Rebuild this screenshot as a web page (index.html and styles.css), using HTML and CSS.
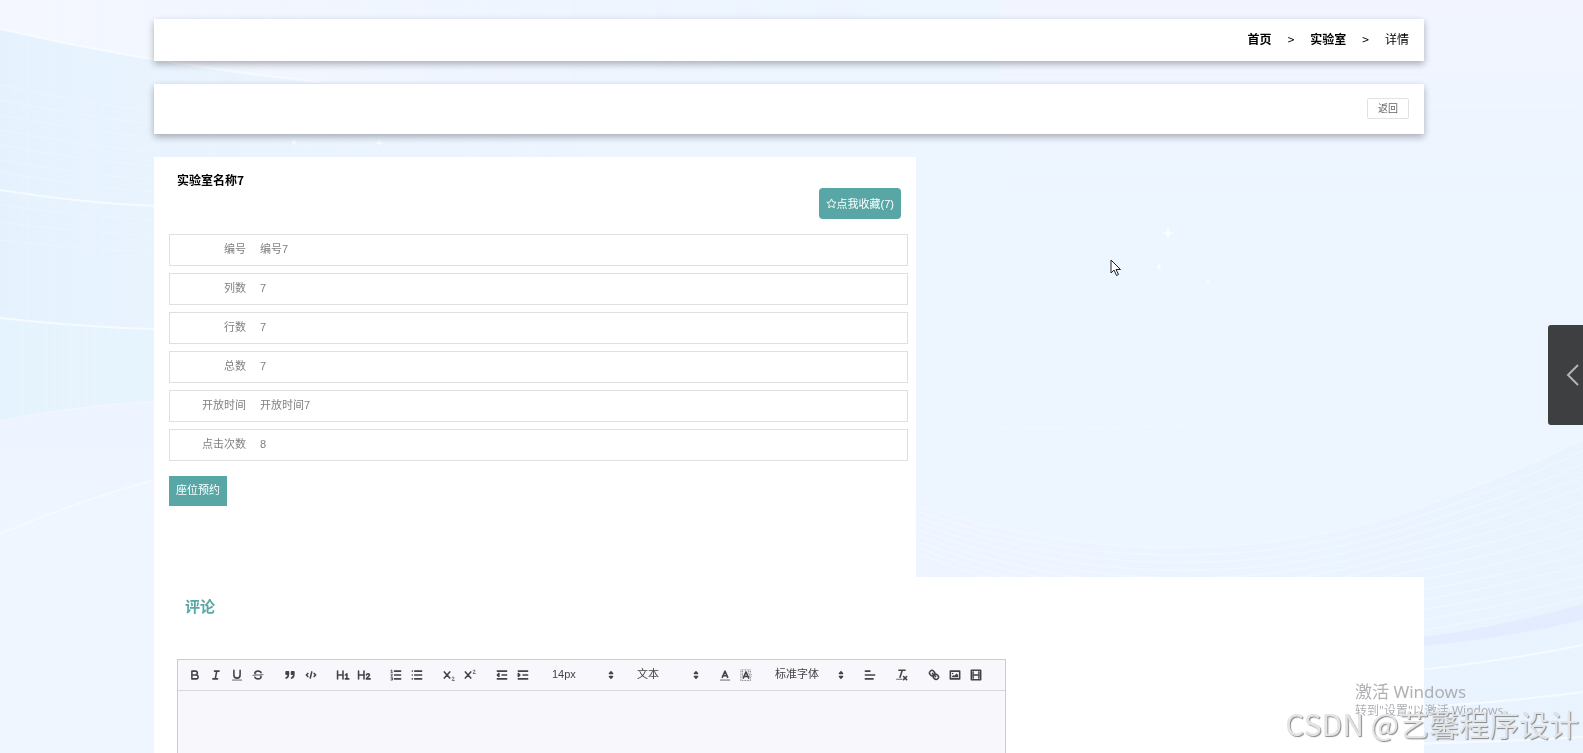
FILE: index.html
```html
<!DOCTYPE html>
<html lang="zh-CN">
<head>
<meta charset="utf-8">
<title>实验室详情</title>
<link rel="stylesheet" href="styles.css">
</head>
<body>
<svg class="backdrop" viewBox="0 0 1583 753" preserveAspectRatio="none" aria-hidden="true">
  <defs>
    <linearGradient id="leftTint" x1="0" y1="0" x2="1" y2="0">
      <stop offset="0" stop-color="#e5f2fe"/><stop offset="1" stop-color="#eaf2fe" stop-opacity="0"/>
    </linearGradient>
    <linearGradient id="lilac" x1="0" y1="0" x2="1" y2="0">
      <stop offset="0" stop-color="#f4f7ff"/><stop offset="1" stop-color="#f1f5ff" stop-opacity="0"/>
    </linearGradient>
    <linearGradient id="corner" x1="0" y1="0" x2="1" y2="0">
      <stop offset="0" stop-color="#eef4ff"/><stop offset="1" stop-color="#e5f2fe"/>
    </linearGradient>
    <linearGradient id="topRight" x1="0" y1="0" x2="0" y2="1">
      <stop offset="0" stop-color="#f2f5ff"/><stop offset="1" stop-color="#f0f5ff" stop-opacity="0"/>
    </linearGradient>
    <linearGradient id="haze" x1="0" y1="0" x2="0" y2="1">
      <stop offset="0" stop-color="#edf3ff"/><stop offset="1" stop-color="#eff6ff"/>
    </linearGradient>
  </defs>
  <path d="M0 0H900L700 80L320 82Q150 64 0 29Z" fill="url(#lilac)"/>
  <path d="M1000 0H1583V200H1000Z" fill="url(#topRight)"/>
  <path d="M0 29Q150 64 320 82L600 150V420H0Z" fill="url(#leftTint)"/>
  <path d="M0 318Q80 326 154 329V400Q70 406 0 421Z" fill="#e6f4fe" opacity=".7"/>
  <path d="M0 421Q70 406 154 400V480Q80 500 0 534Z" fill="url(#haze)"/>
  <path d="M0 534Q80 500 154 480V753H0Z" fill="#eff6ff"/>
  <g fill="none" stroke="#fff">
    <path d="M0 29Q150 64 320 82" stroke-width="2" opacity=".5"/>
    <path d="M0 190Q80 203 154 206" stroke-width="2" opacity=".6"/>
    <path d="M0 318Q80 327 154 329" stroke-width="2" opacity=".6"/>
    <path d="M0 421Q70 406 154 402" opacity=".3"/>
    <path d="M0 534Q80 500 154 480" stroke-width="2" opacity=".4"/>
    <path d="M0 85Q80 103 154 111M0 100Q80 116 154 124M0 115Q80 130 154 138M0 130Q80 145 154 152M0 145Q80 160 154 166M0 160Q80 174 154 180M0 172Q80 186 154 192M0 205Q80 216 154 220M0 222Q80 232 154 236M0 240Q80 249 154 252" opacity=".2"/>
    <path d="M0 540Q80 508 154 490M0 546Q80 515 154 499M0 552Q80 522 154 508" opacity=".2"/>
  </g>
  <path d="M916 505Q1160 585 1400 515Q1500 480 1583 440V753H916Z" fill="url(#corner)" opacity=".7"/>
  <g fill="none" stroke="#fff">
    <path d="M1570 200Q1430 395 1180 425Q1090 430 990 428" opacity=".3"/>
    <g opacity=".35">
      <path d="M916 505Q1160 585 1400 515Q1500 480 1583 440"/>
      <path d="M916 511Q1160 593 1400 523Q1500 490 1583 451"/>
      <path d="M916 517Q1160 601 1400 531Q1500 500 1583 464"/>
      <path d="M916 523Q1160 609 1400 539Q1500 510 1583 476"/>
      <path d="M916 529Q1160 617 1400 547Q1500 520 1583 487"/>
      <path d="M916 535Q1160 625 1400 555Q1500 532 1583 502"/>
      <path d="M916 541Q1160 633 1400 563Q1500 543 1583 515"/>
      <path d="M916 547Q1160 641 1400 574Q1500 555 1583 528"/>
      <path d="M916 553Q1160 649 1400 584Q1500 566 1583 541"/>
    </g>
    <path d="M1400 594Q1500 577 1583 553M1400 604Q1500 587 1583 565M1400 614Q1500 597 1583 576M1400 624Q1500 607 1583 586M1400 634Q1500 619 1583 597" opacity=".35"/>
    <path d="M1400 672Q1500 662 1583 645M1400 708Q1500 703 1583 692M1400 744Q1500 742 1583 737" stroke-width="2" opacity=".6"/>
  </g>
  <path d="M1400 640Q1500 628 1583 604V620Q1500 640 1400 648Z" fill="#e0eafe" opacity=".7"/>
  <g fill="#fff">
    <path d="M1168 227l1 5 5 1-5 1-1 6-1-6-5-1 5-1z"/>
    <path d="M1159 263l1 3 2 1-2 1-1 3-1-3-2-1 2-1z" opacity=".8"/>
    <path d="M1208 278l1 2 1 1-1 1-1 2-1-2-1-1 1-1z" opacity=".5"/>
    <path d="M294 138l1 3 2 1-2 1-1 3-1-3-2-1 2-1z" opacity=".7"/>
    <path d="M379 138l1 4 4 1-4 1-1 2-1-2-4-1 4-1z" opacity=".8"/>
  </g>
</svg>

<main class="page">
  <nav class="bar crumbs" aria-label="面包屑">
    <a href="#">首页</a><span>&gt;</span><a href="#">实验室</a><span>&gt;</span><span>详情</span>
  </nav>

  <div class="bar back-bar"><button class="back" type="button">返回</button></div>

  <section class="detail">
    <h1>实验室名称7</h1>
    <button class="favorite" type="button">
      <svg viewBox="0 0 12 12" aria-hidden="true"><path d="M6 1l1.500 3.300 3.500.4-2.600 2.400.7 3.500L6 8.900l-3.100 1.700.7-3.500L1 4.700l3.500-.4z"/></svg>点我收藏(7)
    </button>
    <dl class="fields">
      <div><dt>编号</dt><dd>编号7</dd></div>
      <div><dt>列数</dt><dd>7</dd></div>
      <div><dt>行数</dt><dd>7</dd></div>
      <div><dt>总数</dt><dd>7</dd></div>
      <div><dt>开放时间</dt><dd>开放时间7</dd></div>
      <div><dt>点击次数</dt><dd>8</dd></div>
    </dl>
    <button class="reserve" type="button">座位预约</button>
  </section>

  <section class="comments">
    <h2>评论</h2>
    <div class="editor">
      <div class="toolbar" role="toolbar" aria-label="格式">
        <div class="group">
          <button type="button" aria-label="粗体"><svg viewBox="0 0 18 18"><path d="M5 4H9.500a2.500 2.500 0 0 1 0 5H5ZM5 9h5.500a2.500 2.500 0 0 1 0 5H5Z"/></svg></button>
          <button type="button" aria-label="斜体"><svg viewBox="0 0 18 18"><path d="M7 4h6M5 14h6M8 14l2-10"/></svg></button>
          <button type="button" aria-label="下划线"><svg viewBox="0 0 18 18"><path d="M5 3V9a4 4 0 0 0 8 0V3"/><path class="thin" d="M3 15.500h12"/></svg></button>
          <button type="button" aria-label="删除线"><svg viewBox="0 0 18 18"><path class="thin" d="M15.500 8.500l-13 1"/><path class="fill" d="M9 8C6.500 7.800 6 7.500 6 6.500 6 5.800 7.300 5 9 5c1.600 0 2.800.7 3 1.300a1 1 0 0 0 1.900-.6C13.400 4.100 11.400 3 9 3 6.200 3 4 4.500 4 6.500a3.200 3.200 0 0 0 .5 1.800ZM9 10c2.500.2 3 .5 3 1.500 0 .7-1.300 1.500-3 1.500-1.600 0-2.800-.7-3-1.300a1 1 0 1 0-1.900.6C4.600 13.900 6.600 15 9 15c2.800 0 5-1.500 5-3.500a3.200 3.200 0 0 0-.5-1.800Z"/></svg></button>
        </div>
        <div class="group">
          <button type="button" aria-label="引用"><svg viewBox="0 0 18 18"><path class="solid" d="M4 5h3v3H4zM11 5h3v3h-3zM7 8c0 4-3 5-3 5M14 8c0 4-3 5-3 5"/></svg></button>
          <button type="button" aria-label="代码"><svg viewBox="0 0 18 18"><path d="M5 7L3 9l2 2M13 7l2 2-2 2M10 5L8 13"/></svg></button>
        </div>
        <div class="group">
          <button type="button" aria-label="标题一"><svg viewBox="0 0 18 18"><path d="M2 4v10M9 4v10M2 9h7M12 9l2-1.500V14M12 14h4.500"/></svg></button>
          <button type="button" aria-label="标题二"><svg viewBox="0 0 18 18"><path d="M2 4v10M9 4v10M2 9h7M12 9c.5-2 4-2 4 0 0 2-3.500 3-4 5h5"/></svg></button>
        </div>
        <div class="group">
          <button type="button" aria-label="有序列表"><svg viewBox="0 0 18 18"><path d="M7 4h8M7 9h8M7 14h8"/><path class="thin" d="M2.500 3l1-.5v3M2.500 5.500h2M2.500 8h2L2.500 10.500h2M2.500 12.500h2v3h-2M3 14h1.500"/></svg></button>
          <button type="button" aria-label="无序列表"><svg viewBox="0 0 18 18"><path d="M6 4h9M6 9h9M6 14h9M3 4v.01M3 9v.01M3 14v.01"/></svg></button>
        </div>
        <div class="group">
          <button type="button" aria-label="下标"><svg viewBox="0 0 18 18"><path d="M3 5l7 8M10 5l-7 8"/><path class="thin" d="M13 12.500c.3-1.300 2.500-1.200 2.300.2C15.200 14 13.500 14.500 13 16h2.800"/></svg></button>
          <button type="button" aria-label="上标"><svg viewBox="0 0 18 18"><path d="M3 5l7 8M10 5l-7 8"/><path class="thin" d="M13 3.500c.3-1.300 2.500-1.200 2.300.2C15.200 5 13.500 5.500 13 7h2.800"/></svg></button>
        </div>
        <div class="group">
          <button type="button" aria-label="减少缩进"><svg viewBox="0 0 18 18"><path d="M3 14h12M3 4h12M9 9h6"/><path class="solid" d="M5 7v4L3 9z"/></svg></button>
          <button type="button" aria-label="增加缩进"><svg viewBox="0 0 18 18"><path d="M3 14h12M3 4h12M9 9h6"/><path class="solid" d="M3 7v4l2-2z"/></svg></button>
        </div>
        <label class="picker"><select aria-label="字号"><option>14px</option></select><svg viewBox="0 0 18 18" aria-hidden="true"><path class="solid" d="M7 11l2 2 2-2zM7 7l2-2 2 2z"/></svg></label>
        <label class="picker"><select aria-label="标题"><option>文本</option></select><svg viewBox="0 0 18 18" aria-hidden="true"><path class="solid" d="M7 11l2 2 2-2zM7 7l2-2 2 2z"/></svg></label>
        <div class="group">
          <button type="button" aria-label="文字颜色"><svg viewBox="0 0 18 18"><path class="thin" d="M3 15.500h12"/><path d="M5.500 12L9 4l3.500 8M11.600 10H6.400"/></svg></button>
          <button type="button" aria-label="背景颜色"><svg viewBox="0 0 18 18"><path class="dots" d="M2 2.500h14M2 4.500h4M12 4.500h4M2 6.500h4M12 6.500h4M2 8.500h3M13 8.500h3M2 10.500h3M13 10.500h3M2 12.500h2M14 12.500h2M2 14.500h2M14 14.500h2M2 16h14"/><path d="M5.500 13L9 5l3.500 8M11.600 11H6.400"/></svg></button>
        </div>
        <label class="picker wide"><select aria-label="字体"><option>标准字体</option></select><svg viewBox="0 0 18 18" aria-hidden="true"><path class="solid" d="M7 11l2 2 2-2zM7 7l2-2 2 2z"/></svg></label>
        <div class="group">
          <button type="button" aria-label="对齐"><svg viewBox="0 0 18 18"><path d="M3 4h6M3 9h12M3 14h10"/></svg></button>
        </div>
        <div class="group">
          <button type="button" aria-label="清除格式"><svg viewBox="0 0 18 18"><path d="M5 3h8M6.400 12L9.400 3M11 11l4 4M15 11l-4 4"/><path class="thin" d="M2 14.500h7"/></svg></button>
        </div>
        <div class="group">
          <button type="button" aria-label="链接"><svg viewBox="0 0 18 18"><path d="M7 7l4 4M8.900 4.600a3.500 3.500 0 0 1 .4 4.700A3.500 3.500 0 0 1 4.600 8.900C3.200 7.500 2 6.400 4.200 4.200S7.500 3.200 8.900 4.600ZM13.400 9.100a3.500 3.500 0 0 0-4.700-.4 3.500 3.500 0 0 0 .4 4.700c1.400 1.400 2.500 2.500 4.700.4S14.800 10.500 13.400 9.100Z"/></svg></button>
          <button type="button" aria-label="图片"><svg viewBox="0 0 18 18"><path d="M3 4h12v10H3z"/><circle class="fill" cx="6" cy="7" r="1"/><path class="fill" d="M5 12v-1l2-2 1 1 3-3 2 2v3z"/></svg></button>
          <button type="button" aria-label="视频"><svg viewBox="0 0 18 18"><path d="M3 3h12v12H3z"/><path class="thin" d="M5.500 3v12M12.500 3v12M3 5.500h3M3 7.500h3M3 10.500h3M3 12.500h3M12 5.500h3M12 7.500h3M12 10.500h3M12 12.500h3"/><path d="M5 9h8"/></svg></button>
        </div>
      </div>
      <textarea aria-label="评论内容"></textarea>
    </div>
  </section>
</main>

<button class="drawer" type="button" aria-label="展开侧栏"><svg viewBox="0 0 14 22" aria-hidden="true"><path d="M12 1L2 11l10 10"/></svg></button>

<div class="activate"><p>激活 Windows</p><p class="hint">转到"设置"以激活 Windows。</p></div>
<p class="watermark">CSDN @艺馨程序设计</p>
<svg class="cursor" viewBox="0 0 12 18" aria-hidden="true"><path d="M1 1v13l3-3 2.500 5.500 2-1L6 10.500h4.500z"/></svg>
</body>
</html>
```

FILE: styles.css
```css
* { box-sizing: border-box; }

body {
  margin: 0;
  background: #edf5ff;
  color: #000;
  font: 12px/16px "Liberation Sans", "Noto Sans CJK SC", sans-serif;
}

h1, h2, p, dl, dd { margin: 0; }
button, select, textarea { font: inherit; }

.backdrop {
  position: fixed;
  inset: 0;
  z-index: -1;
  width: 100%;
  height: 100%;
}

.page {
  display: flex;
  flex-direction: column;
  min-height: 100vh;
  padding: 19px 159px 0 154px;
}

/* top bars */
.bar {
  display: flex;
  align-items: center;
  justify-content: flex-end;
  padding: 0 15px 2px;
  margin-bottom: 23px;
  background: #fff;
  box-shadow: 0 3px 7px rgba(0, 0, 0, .3);
}

.crumbs {
  gap: 16px;
  min-height: 42px;
  font-family: "Noto Sans CJK SC", sans-serif;
}
.crumbs a { color: #000; font-weight: 700; text-decoration: none; }

.back-bar { min-height: 50px; }
.back {
  padding: 0 10px;
  border: 1px solid #e2e2e2;
  border-radius: 2px;
  background: #fff;
  color: #666;
  font-size: 10px;
  line-height: 19px;
}

/* laboratory details */
.detail {
  display: flex;
  flex-direction: column;
  align-items: flex-start;
  width: 60%;
  min-height: 420px;
  padding: 15px 8px 0 15px;
  background: #fff;
}
.detail h1 {
  padding-left: 8px;
  font: 700 12px/16px "Noto Sans CJK SC", sans-serif;
}
.favorite, .reserve {
  border: 0;
  background: #58a6a6;
  color: #fff;
  font-size: 11px;
}
.favorite {
  display: flex;
  align-items: center;
  align-self: flex-end;
  height: 31px;
  padding: 0 7px;
  margin-right: 7px;
  border-radius: 4px;
}
.favorite svg { width: 11px; fill: none; stroke: #fff; }

.fields {
  display: flex;
  flex-direction: column;
  gap: 7px;
  width: 100%;
  margin: 15px 0;
  color: #808080;
  font-size: 11px;
}
.fields div {
  display: flex;
  gap: 14px;
  padding-bottom: 2px;
  border: 1px solid #dfdfdf;
  line-height: 28px;
}
.fields dt { width: 76px; text-align: right; }

.reserve { height: 30px; padding: 0 7px 2px; }

/* comments */
.comments {
  display: flex;
  flex: 1;
  flex-direction: column;
  padding: 18px 23px 0;
  background: #fff;
}
.comments h2 {
  padding-left: 8px;
  margin-bottom: 42px;
  color: #58a6a6;
  font: 700 15px/22px "Noto Sans CJK SC", sans-serif;
}
.editor {
  display: flex;
  flex: 1;
  flex-direction: column;
  width: 68%;
  max-width: 829px;
  min-height: 94px;
  border: 1px solid #ccc;
  border-bottom: 0;
  background: #f7f7fc;
}
.toolbar {
  display: flex;
  align-items: center;
  gap: 11px;
  height: 31px;
  padding-left: 6px;
  border-bottom: 1px solid #d8d8dc;
}
.group { display: flex; }
.group button {
  display: flex;
  align-items: center;
  justify-content: center;
  width: 21px;
  height: 18px;
  padding: 0;
  border: 0;
  background: none;
}
.toolbar svg { width: 14px; height: 14px; fill: none; stroke: #444; stroke-width: 2; stroke-linecap: round; stroke-linejoin: round; }
.toolbar .thin { stroke-width: 1; }
.toolbar .fill { fill: #444; stroke: none; }
.toolbar .solid { fill: #444; }
.toolbar .dots { stroke-width: 1; stroke-dasharray: 1 1; stroke-linecap: butt; }

.picker { display: grid; grid-template-columns: 1fr 14px; align-items: center; width: 74px; }
.picker.wide { width: 81px; }
.picker select {
  grid-area: 1 / 1 / 2 / 3;
  height: 18px;
  padding: 0 0 2px 8px;
  border: 0;
  appearance: none;
  background: none;
  color: #444;
  font-size: 11px;
}
.picker svg { grid-area: 1 / 2; pointer-events: none; }

.editor textarea { flex: 1; border: 0; background: none; resize: none; }

/* floating items */
.drawer {
  position: fixed;
  top: 325px;
  right: 0;
  display: flex;
  align-items: center;
  justify-content: flex-end;
  width: 35px;
  height: 100px;
  padding: 0 3px 0 0;
  border: 0;
  border-radius: 3px 0 0 3px;
  background: #3e3f41;
}
.drawer svg { width: 14px; height: 22px; fill: none; stroke: #b4b4b4; stroke-width: 2; }

.activate {
  position: fixed;
  right: 64px;
  bottom: 34px;
  width: 164px;
  color: #aeb0b3;
  font: 17px/22px "Noto Sans", "Noto Sans CJK SC", sans-serif;
  white-space: nowrap;
}
.activate .hint { font-size: 12px; line-height: 16px; }

.watermark {
  position: fixed;
  right: 4px;
  bottom: 10px;
  color: #e2e4e6;
  font: 30px/40px "Noto Sans CJK SC", sans-serif;
  text-shadow: 1px 1px 1px #888;
  white-space: nowrap;
}

.cursor {
  position: fixed;
  top: 259px;
  left: 1110px;
  width: 12px;
  height: 18px;
  fill: #fff;
  stroke: #222;
}
```
